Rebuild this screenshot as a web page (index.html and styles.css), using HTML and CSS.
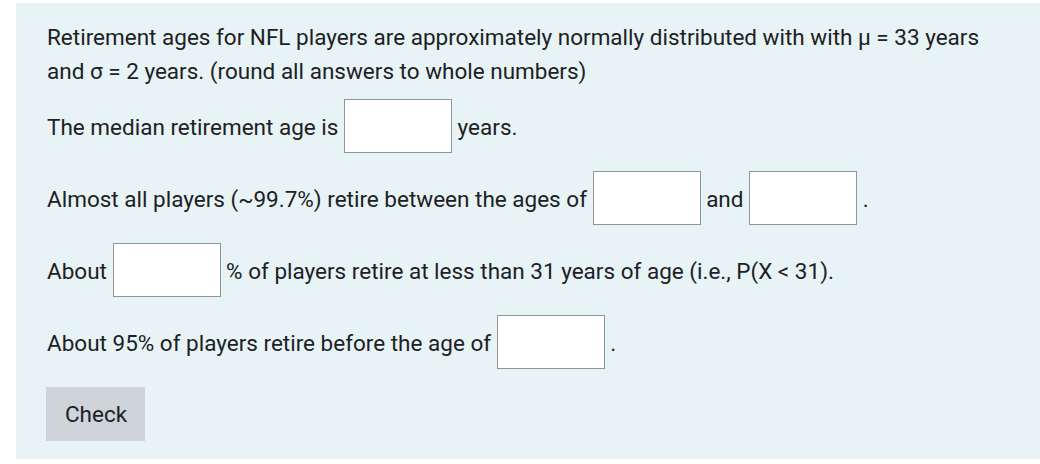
FILE: index.html
```html
<!DOCTYPE html>
<html lang="en">
<head>
<meta charset="utf-8">
<title>Question</title>
<link rel="stylesheet" href="styles.css">
</head>
<body>
<div class="formulation">
  <p class="intro">Retirement ages for NFL players are approximately normally distributed with with μ = 33 years and σ = 2 years. (round all answers to whole numbers)</p>
  <p class="row">The median retirement age is <input class="ans" type="text"> years.</p>
  <p class="row">Almost all players (~99.7%) retire between the ages of <input class="ans" type="text"> and <input class="ans" type="text"> .</p>
  <p class="row">About <input class="ans" type="text"> % of players retire at less than 31 years of age (i.e., P(X &lt; 31).</p>
  <p class="row">About 95% of players retire before the age of <input class="ans" type="text"> .</p>
  <button class="check" type="button">Check</button>
</div>
</body>
</html>
```
FILE: styles.css
```css
html, body {
  margin: 0;
  padding: 0;
  background: #ffffff;
}
body {
  padding-top: 3px;
  padding-left: 16px;
  font-family: Roboto, "Liberation Sans", sans-serif;
  font-size: 22.5px;
  line-height: 33.75px;
  color: #1d2125;
}
.formulation {
  background: #e7f3f5;
  padding: 18px 20px 18px 31px;
  height: 420px;
  box-sizing: content-box;
}
.formulation p {
  margin: 0;
}
.intro {
  margin-bottom: 10px !important;
}
.row {
  margin-bottom: 12px !important;
  white-space: nowrap;
}
.ans {
  display: inline-block;
  box-sizing: border-box;
  width: 108px;
  height: 54px;
  margin: 0 0 6px 0;
  padding: 0 10px;
  border: 1px solid #8f959e;
  background: #ffffff;
  vertical-align: middle;
  font: inherit;
}
.check {
  display: block;
  box-sizing: border-box;
  width: 99px;
  height: 54px;
  margin: 0 0 0 -1px;
  padding: 0 0 0 1px;
  border: none;
  background: #ced4da;
  color: #1d2125;
  font: inherit;
  line-height: 54px;
}
```
